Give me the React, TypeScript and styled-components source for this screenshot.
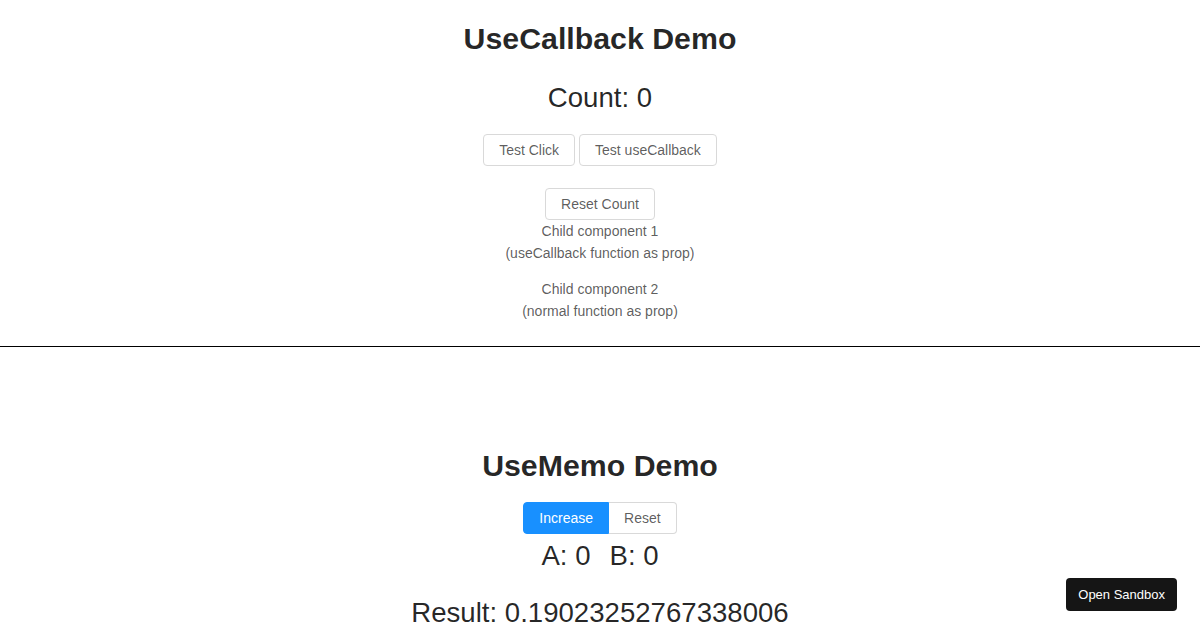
import React from "react";
import styled, { createGlobalStyle } from "styled-components";

const Global = createGlobalStyle`
  html, body { margin: 0; padding: 0; background: #fff; }
  body { font-family: "Liberation Sans", Arial, sans-serif; color: rgba(0,0,0,0.65); }
  * { box-sizing: border-box; }
`;

const Page = styled.div`
  display: flex;
  flex-direction: column;
  width: 1200px;
  height: 630px;
  overflow: hidden;
  position: relative;
`;

const Section = styled.section<{ $top: number }>`
  display: flex;
  flex-direction: column;
  align-items: center;
  padding-top: ${(p) => p.$top}px;
`;

const Title = styled.h1`
  margin: 0;
  font-size: 30.3px;
  line-height: 40px;
  font-weight: 700;
  color: rgba(0, 0, 0, 0.85);
`;

const BigText = styled.h2<{ $mt: number }>`
  margin: ${(p) => p.$mt}px 0 0;
  font-size: 27.6px;
  line-height: 38px;
  font-weight: 400;
  color: rgba(0, 0, 0, 0.85);
  display: flex;
  gap: 19px;
`;

const ButtonRow = styled.div<{ $mt: number; $gap: number }>`
  display: flex;
  gap: ${(p) => p.$gap}px;
  margin-top: ${(p) => p.$mt}px;
`;

const Button = styled.button<{ $primary?: boolean; $join?: "left" | "right" }>`
  height: 32px;
  padding: 0 15px;
  font-family: "Liberation Sans", Arial, sans-serif;
  font-size: 14px;
  line-height: 30px;
  border: 1px solid ${(p) => (p.$primary ? "#1890ff" : "#d9d9d9")};
  background: ${(p) => (p.$primary ? "#1890ff" : "#fff")};
  color: ${(p) => (p.$primary ? "#fff" : "rgba(0,0,0,0.65)")};
  border-radius: ${(p) =>
    p.$join === "left" ? "4px 0 0 4px" : p.$join === "right" ? "0 4px 4px 0" : "4px"};
  ${(p) => (p.$join === "right" ? "border-left: 0;" : "")}
  cursor: pointer;
`;

const Child = styled.div<{ $mt: number }>`
  margin-top: ${(p) => p.$mt}px;
  font-size: 14px;
  line-height: 22px;
  text-align: center;
  color: rgba(0, 0, 0, 0.65);
`;

const Divider = styled.hr`
  margin: 24px 0 0;
  border: 0;
  border-top: 1px solid #000;
  width: 100%;
`;

const SandboxButton = styled.button`
  position: absolute;
  right: 23px;
  top: 578px;
  height: 33px;
  padding: 0 12px;
  background: #151515;
  color: #fff;
  border: 0;
  border-radius: 4px;
  font-family: "Liberation Sans", Arial, sans-serif;
  font-size: 13px;
`;

export default function App() {
  return (
    <>
      <Global />
      <Page>
        <Section $top={19}>
          <Title>UseCallback Demo</Title>
          <BigText $mt={20}>Count: 0</BigText>
          <ButtonRow $mt={17} $gap={4}>
            <Button>Test Click</Button>
            <Button>Test useCallback</Button>
          </ButtonRow>
          <ButtonRow $mt={22} $gap={0}>
            <Button>Reset Count</Button>
          </ButtonRow>
          <Child $mt={0}>
            Child component 1
            <br />
            (useCallback function as prop)
          </Child>
          <Child $mt={14}>
            Child component 2
            <br />
            (normal function as prop)
          </Child>
        </Section>
        <Divider />
        <Section $top={99}>
          <Title>UseMemo Demo</Title>
          <ButtonRow $mt={16} $gap={0}>
            <Button $primary $join="left">Increase</Button>
            <Button $join="right">Reset</Button>
          </ButtonRow>
          <BigText $mt={3}>
            <span>A: 0</span>
            <span>B: 0</span>
          </BigText>
          <BigText $mt={19}>Result: 0.19023252767338006</BigText>
        </Section>
        <SandboxButton>Open Sandbox</SandboxButton>
      </Page>
    </>
  );
}
